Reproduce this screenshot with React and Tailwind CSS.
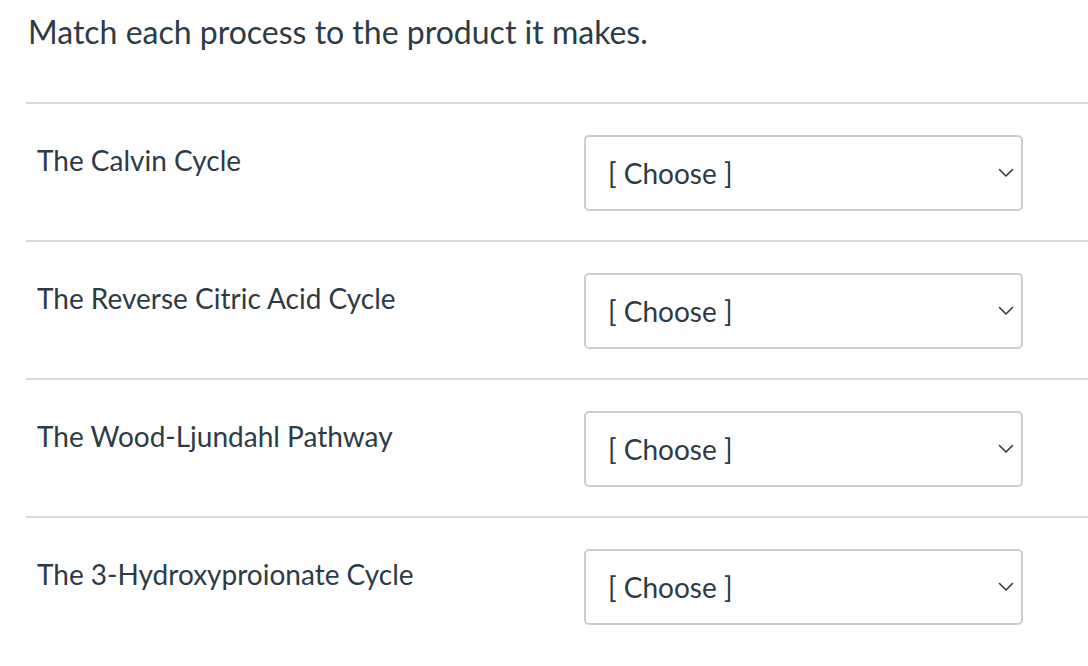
import React from "react";

const rows = [
  "The Calvin Cycle",
  "The Reverse Citric Acid Cycle",
  "The Wood-Ljundahl Pathway",
  "The 3-Hydroxyproionate Cycle",
];

function Chevron() {
  return (
    <svg width="16" height="10" viewBox="0 0 16 10" fill="none">
      <path d="M1.5 1.5 L8 8 L14.5 1.5" stroke="#2d3b45" strokeWidth="1.6" strokeLinecap="round" strokeLinejoin="round" />
    </svg>
  );
}

export default function App() {
  return (
    <div className="w-[1088px] h-[666px] bg-white overflow-hidden text-[#2d3b45]" style={{ fontFamily: "Lato, 'Open Sans', sans-serif" }}>
      <div className="h-[102px] pl-[28px] pt-[13px]">
        <h1 className="text-[32px] leading-[38px] font-normal">Match each process to the product it makes.</h1>
      </div>
      <div className="ml-[26px]">
        {rows.map((r) => (
          <div key={r} className="border-t-2 border-[#dadada] pt-[31px] pb-[29px] flex">
            <div className="w-[558px] pl-[11px] pt-[8px] text-[28px] leading-[34px]">{r}</div>
            <div className="w-[439px] h-[76px] border-2 border-[#cdcdcd] rounded-[5px] flex items-center justify-between pl-[22px] pr-[7px]">
              <span className="text-[28px] leading-[34px]">[ Choose ]</span>
              <Chevron />
            </div>
          </div>
        ))}
      </div>
    </div>
  );
}
